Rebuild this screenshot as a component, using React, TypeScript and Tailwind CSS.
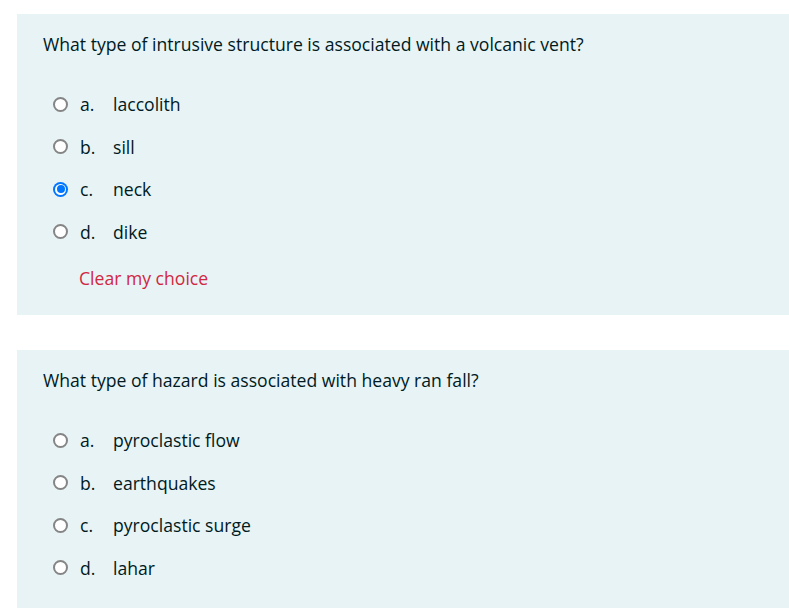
import React from 'react';

type Question = {
  text: string;
  options: { letter: string; label: string }[];
  checked?: number;
  showClear?: boolean;
};

const questions: Question[] = [
  {
    text: 'What type of intrusive structure is associated with a volcanic vent?',
    options: [
      { letter: 'a.', label: 'laccolith' },
      { letter: 'b.', label: 'sill' },
      { letter: 'c.', label: 'neck' },
      { letter: 'd.', label: 'dike' },
    ],
    checked: 2,
    showClear: true,
  },
  {
    text: 'What type of hazard is associated with heavy ran fall?',
    options: [
      { letter: 'a.', label: 'pyroclastic flow' },
      { letter: 'b.', label: 'earthquakes' },
      { letter: 'c.', label: 'pyroclastic surge' },
      { letter: 'd.', label: 'lahar' },
    ],
  },
];

function Radio({ checked }: { checked: boolean }) {
  if (checked) {
    return (
      <span className="flex h-[15px] w-[15px] items-center justify-center rounded-full bg-[#0075ff]">
        <span className="flex h-[11px] w-[11px] items-center justify-center rounded-full bg-white">
          <span className="h-[8px] w-[8px] rounded-full bg-[#0075ff]" />
        </span>
      </span>
    );
  }
  return <span className="h-[15px] w-[15px] rounded-full border-2 border-[#858585] bg-white" />;
}

function QuestionCard({ q }: { q: Question }) {
  return (
    <div className="ml-[17px] bg-[#e7f3f5] pl-[26px] pt-[16px] pb-[25px] text-[#001a1e]">
      <p className="h-[28px] leading-[28px]">{q.text}</p>
      <div className="mt-[25px]">
        {q.options.map((o, i) => (
          <div key={o.letter} className="flex h-[42.5px] items-center">
            <span className="ml-[10px] flex w-[27px]">
              <Radio checked={q.checked === i} />
            </span>
            <span className="w-[33px]">{o.letter}</span>
            <span>{o.label}</span>
          </div>
        ))}
      </div>
      {q.showClear && (
        <div className="mt-[13px] pl-[36px] leading-[24px] text-[#d1273f]">Clear my choice</div>
      )}
    </div>
  );
}

export default function App() {
  return (
    <div
      className="min-h-[608px] w-[789px] overflow-hidden bg-white pt-[14px] text-[17.6px]"
      style={{ fontFamily: '"Open Sans", "Noto Sans", sans-serif' }}
    >
      <QuestionCard q={questions[0]} />
      <div className="h-[35px]" />
      <QuestionCard q={questions[1]} />
    </div>
  );
}
